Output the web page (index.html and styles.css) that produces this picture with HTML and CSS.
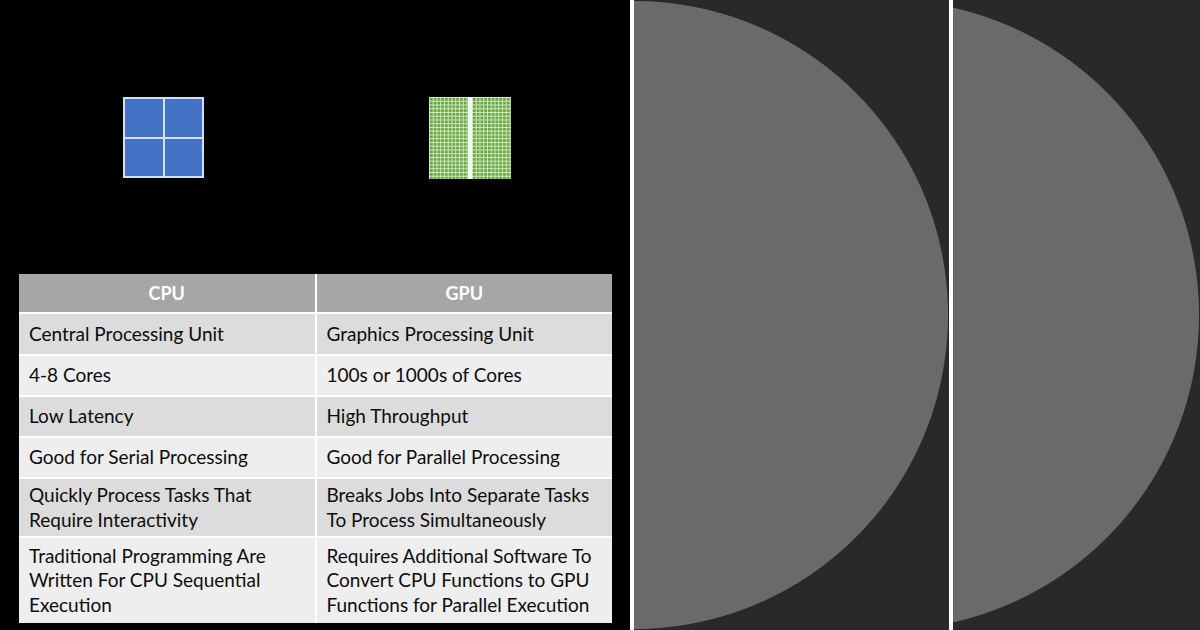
FILE: index.html
```html
<!DOCTYPE html>
<html lang="en">
<head>
<meta charset="utf-8">
<title>CPU vs GPU</title>
<link rel="stylesheet" href="styles.css">
</head>
<body>
<div class="screen">
  <section class="slide">
    <div class="chips">
      <div class="cpu"><span></span><span></span><span></span><span></span></div>
      <div class="gpu"><span></span><span></span></div>
    </div>
    <div class="table">
      <div class="th">CPU</div>
      <div class="th">GPU</div>
      <div class="td odd">Central Processing Unit</div>
      <div class="td odd">Graphics Processing Unit</div>
      <div class="td even">4-8 Cores</div>
      <div class="td even">100s or 1000s of Cores</div>
      <div class="td odd">Low Latency</div>
      <div class="td odd">High Throughput</div>
      <div class="td even">Good for Serial Processing</div>
      <div class="td even">Good for Parallel Processing</div>
      <div class="td odd">Quickly Process Tasks That Require Interactivity</div>
      <div class="td odd">Breaks Jobs Into Separate Tasks To Process Simultaneously</div>
      <div class="td even">Traditional Programming Are Written For CPU Sequential Execution</div>
      <div class="td even">Requires Additional Software To Convert CPU Functions to GPU Functions for Parallel Execution</div>
    </div>
  </section>
  <div class="divider"></div>
  <div class="panel panel-a"></div>
  <div class="divider"></div>
  <div class="panel panel-b"></div>
</div>
</body>
</html>
```
FILE: styles.css
```css
* { box-sizing: border-box; }
html, body { margin: 0; padding: 0; }
body {
  width: 1200px;
  height: 630px;
  overflow: hidden;
  background: #000;
  font-family: Lato, "Liberation Sans", sans-serif;
}
.screen {
  display: flex;
  width: 1200px;
  height: 630px;
}
.slide {
  width: 630px;
  flex: none;
  background: #000;
  padding: 97px 0 0 19px;
  display: flex;
  flex-direction: column;
}
.chips {
  display: flex;
  align-items: flex-start;
  padding-left: 104px;
  gap: 225px;
  height: 81px;
}
.cpu {
  width: 81px;
  height: 81px;
  background: #d6e0f2;
  padding: 2px;
  display: grid;
  grid-template-columns: 1fr 1fr;
  grid-template-rows: 1fr 1fr;
  gap: 2px;
}
.cpu span { background: #4472c4; }
.gpu {
  width: 82px;
  height: 82px;
  display: flex;
  gap: 4px;
  background: #f4f9f1;
}
.gpu span {
  flex: 1;
  background-color: #6aa842;
  background-image:
    linear-gradient(90deg, #d3e8c6 1px, transparent 1px),
    linear-gradient(#d3e8c6 1px, transparent 1px);
  background-size: 3.75px 3.75px;
}
.table {
  margin-top: 96px;
  width: 593px;
  display: grid;
  grid-template-columns: 1fr 1fr;
  grid-template-rows: 38px 40px 39px 39px 39px 57px 85px;
  gap: 2px;
  background: #fff;
}
.th {
  background: #a6a6a6;
  color: #fff;
  font-weight: 700;
  font-size: 18px;
  display: flex;
  align-items: center;
  justify-content: center;
}
.td {
  display: flex;
  align-items: center;
  padding: 0 10px;
  font-size: 19px;
  line-height: 24.5px;
  color: #0d0d0d;
}
.odd { background: #dcdcdc; }
.even { background: #eeeeee; }
.divider {
  width: 4px;
  flex: none;
  background: #fff;
}
.panel {
  height: 630px;
  background-color: #292929;
}
.panel-a {
  width: 315px;
  flex: none;
  background-image: radial-gradient(circle at 0px 315px, #6a6a6a 313.5px, #292929 314.5px);
}
.panel-b {
  flex: 1;
  background-image: radial-gradient(circle at -69px 315px, #6a6a6a 314.5px, #292929 315.5px);
}
```
